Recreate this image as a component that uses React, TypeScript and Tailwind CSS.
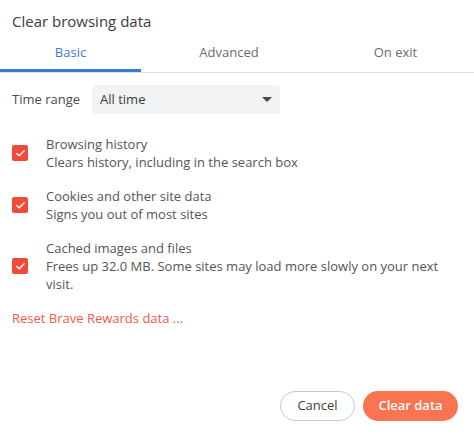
import { Check } from 'lucide-react';

const items = [
  { title: 'Browsing history', desc: 'Clears history, including in the search box' },
  { title: 'Cookies and other site data', desc: 'Signs you out of most sites' },
  {
    title: 'Cached images and files',
    desc: 'Frees up 32.0 MB. Some sites may load more slowly on your next visit.',
  },
];

const App = () => {
  return (
    <div
      className="w-[474px] h-[437px] bg-white flex flex-col text-[#3c4043]"
      style={{ fontFamily: '"Open Sans", sans-serif' }}
    >
      <h1 className="px-3 pt-[10px] text-[15px] leading-[22px] text-[#3c3c3c]">Clear browsing data</h1>

      <div className="mt-[8px] flex border-b border-[#e0e0e0] text-[13px]">
        <div className="w-[141px] h-[32px] flex items-center justify-center text-[#3a7bd5] border-b-[3px] border-[#3a7bd5] -mb-px pb-[3px]">
          Basic
        </div>
        <div className="w-[176px] h-[32px] flex items-center justify-center text-[#6b6b6b] pb-[6px]">
          Advanced
        </div>
        <div className="flex-1 h-[32px] flex items-center justify-center text-[#6b6b6b] pb-[6px]">
          On exit
        </div>
      </div>

      <div className="mt-[12px] px-3 flex items-center gap-3 text-[13px]">
        <span className="text-[#4a4a4a]">Time range</span>
        <div className="w-[188px] h-[29px] rounded bg-[#f1f3f4] flex items-center justify-between pl-2 pr-[8px] text-[#3c3c3c]">
          <span>All time</span>
          <svg width="10" height="5" viewBox="0 0 10 5">
            <path d="M0 0h10L5 5z" fill="#4a4a4a" />
          </svg>
        </div>
      </div>

      <div className="mt-[21px] flex flex-col gap-[16px] px-3">
        {items.map((item) => (
          <div key={item.title} className="flex items-center">
            <div className="w-4 h-4 rounded-[2px] bg-[#ef4a3a] flex items-center justify-center shrink-0">
              <Check size={11} strokeWidth={3} className="text-white" />
            </div>
            <div className="ml-[18px] text-[13px] leading-[18px] text-[#555]">
              <p>{item.title}</p>
              <p>{item.desc}</p>
            </div>
          </div>
        ))}
      </div>

      <a className="mt-[16px] px-3 text-[13px] text-[#f05a4a] cursor-pointer">Reset Brave Rewards data ...</a>

      <div className="mt-auto mb-[16px] px-4 flex justify-end gap-2 text-[13px]">
        <button className="w-[75px] h-[30px] rounded-full border border-[#c8c8c8] text-[#3c3c3c]">
          Cancel
        </button>
        <button className="w-[95px] h-[30px] rounded-full bg-[#fb7452] text-white font-semibold">
          Clear data
        </button>
      </div>
    </div>
  );
};

export default App;
